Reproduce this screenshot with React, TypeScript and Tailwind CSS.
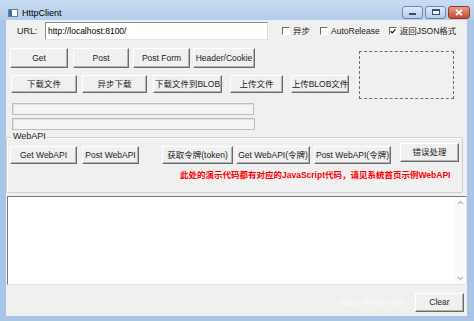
import React from "react";

const font = "font-['Liberation_Sans','Noto_Sans_CJK_SC',sans-serif]";
const btnBase =
  "flex items-center justify-center shrink-0 bg-[#f0f0f0] border border-t-white border-l-white border-r-[#6b6b6b] border-b-[#6b6b6b] shadow-[inset_-1px_-1px_0_#b4b4b4] text-[8.5px] text-[#1a1a1a] whitespace-nowrap leading-none";

function Btn({ cls, children }: { cls: string; children: React.ReactNode }) {
  return <div className={`${btnBase} ${cls}`}>{children}</div>;
}

function Check({ checked, label, cls }: { checked?: boolean; label: string; cls: string }) {
  return (
    <div className={`flex items-center ${cls}`}>
      <div className="w-[8px] h-[8px] bg-white border border-t-[#6b6b6b] border-l-[#6b6b6b] border-r-white border-b-white flex items-center justify-center">
        {checked && (
          <svg width="7" height="7" viewBox="0 0 7 7">
            <path d="M0.8 3.2 L2.6 5.2 L6.3 0.9" stroke="#111" strokeWidth="1.4" fill="none" />
          </svg>
        )}
      </div>
      <span className="ml-[3px] text-[8.5px] text-[#1a1a1a] leading-none">{label}</span>
    </div>
  );
}

function Progress({ cls }: { cls: string }) {
  return <div className={`h-[12px] bg-[#f4f4f4] border border-[#bdbdbd] shadow-[inset_1px_1px_0_#e2e2e2] ${cls}`} />;
}

export default function App() {
  return (
    <div className={`w-[474px] h-[321px] bg-[#a9c5e6] flex flex-col overflow-hidden ${font}`}>
      {/* title bar */}
      <div className="h-[20px] shrink-0 flex items-center bg-[linear-gradient(#c9dcf2,#b2cceb)]">
        <div className="ml-[8px] w-[10px] h-[8px] mt-[6px] bg-white border border-[#6f7f96] flex">
          <div className="w-[3px] h-full bg-[#3d6fb3]" />
        </div>
        <span className="ml-[4px] mt-[6px] text-[9px] text-black leading-none">HttpClient</span>
        <div className="ml-auto mr-[4px] mt-[4px] flex items-center gap-[2px]">
          <div className="w-[21px] h-[13px] rounded-[3px] border border-[#6d89b0] bg-[linear-gradient(#e0ebf8,#b5cbe7)] flex items-center justify-center">
            <div className="w-[7px] h-[2px] bg-white border-[0.5px] border-[#3a4e6b] mt-[3px]" />
          </div>
          <div className="w-[21px] h-[13px] rounded-[3px] border border-[#6d89b0] bg-[linear-gradient(#e0ebf8,#b5cbe7)] flex items-center justify-center">
            <div className="w-[8px] h-[6px] border border-[#3a4e6b] border-t-2 bg-white/60" />
          </div>
          <div className="w-[22px] h-[13px] rounded-[3px] border border-[#8a3a2e] bg-[linear-gradient(#e99c89,#c9462f)] flex items-center justify-center">
            <svg width="8" height="7" viewBox="0 0 8 7">
              <path d="M1 0.8 L7 6.2 M7 0.8 L1 6.2" stroke="#fff" strokeWidth="1.8" />
            </svg>
          </div>
        </div>
      </div>

      {/* client area */}
      <div className="ml-[6px] w-[461px] h-[296px] bg-[#f0f0f0] flex flex-col">
        {/* URL row */}
        <div className="mt-[2px] h-[18px] flex items-center">
          <span className="ml-[11px] w-[28px] text-[9px] text-[#1a1a1a] leading-none">URL:</span>
          <div className="w-[223px] h-[18px] bg-white border border-[#8e8f8f] border-b-[#e3e3e3] border-r-[#dcdcdc] flex items-center pl-[2px] text-[8.5px] text-black">
            http://localhost:8100/
          </div>
          <Check cls="ml-[14px]" label="异步" />
          <Check cls="ml-[10px]" label="AutoRelease" />
          <Check cls="ml-[9px]" checked label="返回JSON格式" />
        </div>

        {/* upper section */}
        <div className="mt-[8px] flex">
          <div className="flex flex-col">
            <div className="flex h-[20px]">
              <Btn cls="ml-[4px] w-[58px]">Get</Btn>
              <Btn cls="ml-[5px] w-[56px]">Post</Btn>
              <Btn cls="ml-[4px] w-[57px]">Post Form</Btn>
              <Btn cls="ml-[3px] w-[62px]">Header/Cookie</Btn>
            </div>
            <div className="mt-[7px] flex h-[18px]">
              <Btn cls="ml-[5px] w-[66px]">下载文件</Btn>
              <Btn cls="ml-[5px] w-[65px]">异步下载</Btn>
              <Btn cls="ml-[6px] w-[69px]">下载文件到BLOB</Btn>
              <Btn cls="ml-[8px] w-[53px]">上传文件</Btn>
              <Btn cls="ml-[8px] w-[58px]">上传BLOB文件</Btn>
            </div>
            <Progress cls="mt-[10px] ml-[6px] w-[242px]" />
            <Progress cls="mt-[3px] ml-[6px] w-[243px]" />
          </div>
          <div className="ml-[10px] mt-[3px] w-[95px] h-[48px] border border-dashed border-[#6f6f6f]" />
        </div>

        {/* group box */}
        <div className="mt-[7px] w-[457px] h-[56px] border border-[#cfcfcf] shadow-[inset_1px_1px_0_#ffffff] rounded-[2px] flex flex-col relative">
          <span className="absolute left-[5px] top-[-6px] px-[1px] bg-[#f0f0f0] text-[9px] text-[#1a1a1a] leading-none">WebAPI</span>
          <div className="flex items-start mt-[5px]">
            <Btn cls="mt-[3px] ml-[3px] w-[67px] h-[18px]">Get WebAPI</Btn>
            <Btn cls="mt-[3px] ml-[5px] w-[57px] h-[18px]">Post WebAPI</Btn>
            <Btn cls="mt-[3px] ml-[23px] w-[71px] h-[18px]">获取令牌(token)</Btn>
            <Btn cls="mt-[3px] ml-[3px] w-[74px] h-[18px]">Get WebAPI(令牌)</Btn>
            <Btn cls="mt-[3px] ml-[4px] w-[77px] h-[18px]">Post WebAPI(令牌)</Btn>
            <Btn cls="ml-[9px] w-[59px] h-[19px]">错误处理</Btn>
          </div>
          <div className="mt-[7px] ml-[173px] text-[8.5px] font-bold text-[#ff0000] leading-none whitespace-nowrap">
            此处的演示代码都有对应的JavaScript代码，请见系统首页示例WebAPI
          </div>
        </div>

        {/* text area */}
        <div className="mt-[3px] ml-[1px] w-[460px] h-[89px] bg-white border border-t-[#7a7a7a] border-l-[#7a7a7a] border-r-[#e3e3e3] border-b-[#e3e3e3] flex">
          <div className="flex-1" />
          <div className="w-[11px] h-full bg-[#fafafa] flex flex-col items-center justify-between py-[3px]">
            <svg width="7" height="5" viewBox="0 0 7 5">
              <path d="M1 4 L3.5 1.5 L6 4" stroke="#b8b8b8" strokeWidth="1.2" fill="none" />
            </svg>
            <svg width="7" height="5" viewBox="0 0 7 5">
              <path d="M1 1 L3.5 3.5 L6 1" stroke="#b8b8b8" strokeWidth="1.2" fill="none" />
            </svg>
          </div>
        </div>

        {/* bottom */}
        <div className="mt-[8px] flex justify-end relative">
          <span className="absolute right-[60px] top-[5px] text-[9px] text-white/70 leading-none">https://blog.csdn.</span>
          <Btn cls="mr-[3px] w-[49px] h-[19px] border-b-[#3c3c3c] border-r-[#3c3c3c]">Clear</Btn>
        </div>
      </div>
    </div>
  );
}
